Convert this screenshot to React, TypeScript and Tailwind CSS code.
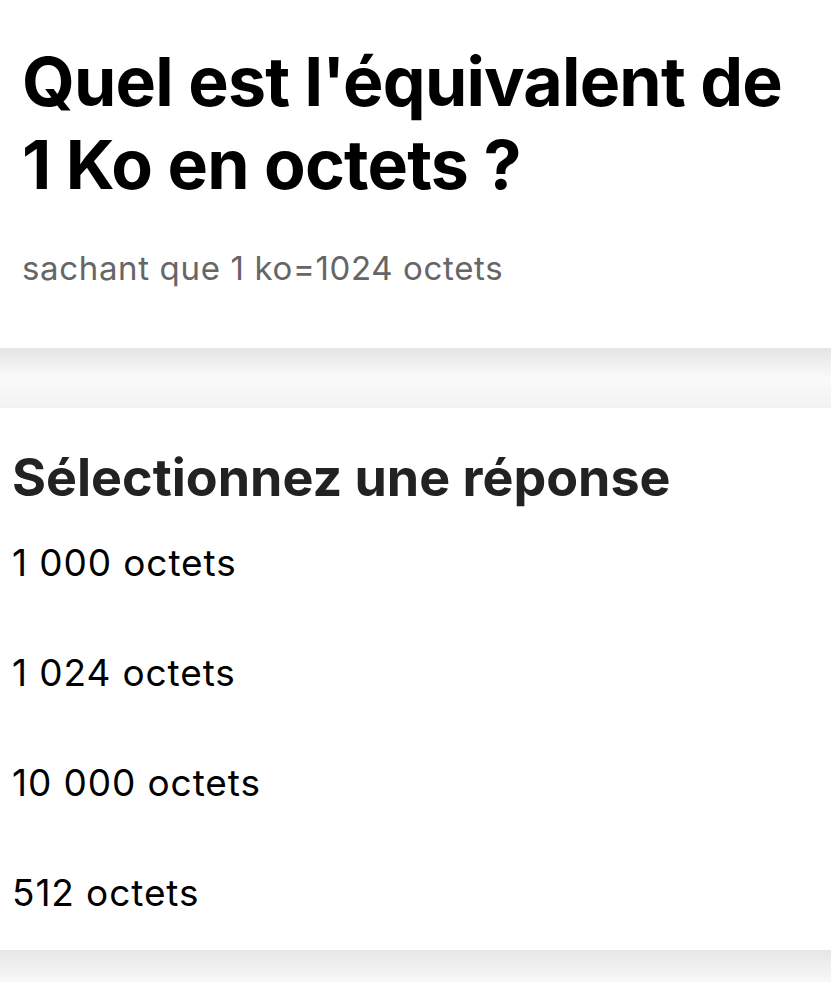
const options = ['1 000 octets', '1 024 octets', '10 000 octets', '512 octets']

export default function App() {
  return (
    <div className="min-h-[982px] bg-[#f8f8f8] font-['Inter','Liberation_Sans',sans-serif]">
      <section className="bg-white px-[22px] pt-[40px] pb-[60px]">
        <h1 className="text-[68px] font-bold leading-[83px] tracking-[-0.8px] text-black">
          Quel est l'équivalent de 1 Ko en octets ?
        </h1>
        <p className="mt-[42px] text-[33px] leading-[40px] tracking-[0.65px] text-[#666]">sachant que 1 ko=1024 octets</p>
      </section>
      <div className="h-[60px] bg-gradient-to-b from-[#e5e5e5] via-[#fafafa] to-[#f2f2f2]" />
      <section className="bg-white px-[12px] pt-[40px] pb-[2px]">
        <h2 className="text-[52px] font-bold leading-[60px] text-[#222]">Sélectionnez une réponse</h2>
        <ul>
          {options.map((o) => (
            <li key={o} className="flex h-[110px] items-center text-[37px] tracking-[0.9px] text-black">
              {o}
            </li>
          ))}
        </ul>
      </section>
      <div className="h-[31px] bg-gradient-to-b from-[#e6e6e6] to-[#f8f8f8]" />
    </div>
  )
}
